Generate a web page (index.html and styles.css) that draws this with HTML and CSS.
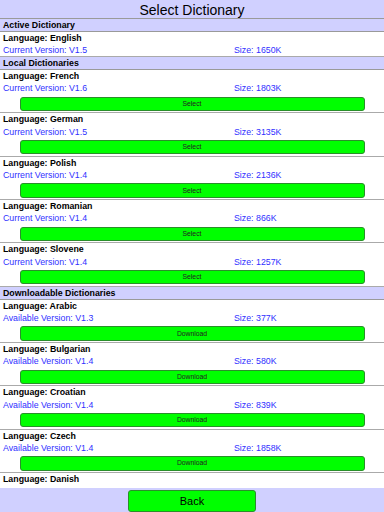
FILE: index.html
```html
<!DOCTYPE html>
<html lang="en">
<head>
  <meta charset="UTF-8" /><meta name="viewport" content="width=device-width, initial-scale=1.0"/>
  <title>Select Dictionary</title>
  <link rel="stylesheet" href="styles.css">
</head>
<body>
<header class="titlebar">Select Dictionary</header>

<div class="list">
  <div class="section">Active Dictionary</div>
  <div class="row short">
    <div class="lang">Language: English</div>
    <div class="info"><span>Current Version: V1.5</span><span>Size: 1650K</span></div>
  </div>

  <div class="section">Local Dictionaries</div>
  <div class="row">
    <div class="lang">Language: French</div>
    <div class="info"><span>Current Version: V1.6</span><span>Size: 1803K</span></div>
    <button class="btn">Select</button>
  </div>
  <div class="row">
    <div class="lang">Language: German</div>
    <div class="info"><span>Current Version: V1.5</span><span>Size: 3135K</span></div>
    <button class="btn">Select</button>
  </div>
  <div class="row">
    <div class="lang">Language: Polish</div>
    <div class="info"><span>Current Version: V1.4</span><span>Size: 2136K</span></div>
    <button class="btn">Select</button>
  </div>
  <div class="row">
    <div class="lang">Language: Romanian</div>
    <div class="info"><span>Current Version: V1.4</span><span>Size: 866K</span></div>
    <button class="btn">Select</button>
  </div>
  <div class="row">
    <div class="lang">Language: Slovene</div>
    <div class="info"><span>Current Version: V1.4</span><span>Size: 1257K</span></div>
    <button class="btn">Select</button>
  </div>

  <div class="section">Downloadable Dictionaries</div>
  <div class="row">
    <div class="lang">Language: Arabic</div>
    <div class="info"><span>Available Version: V1.3</span><span>Size: 377K</span></div>
    <button class="btn">Download</button>
  </div>
  <div class="row">
    <div class="lang">Language: Bulgarian</div>
    <div class="info"><span>Available Version: V1.4</span><span>Size: 580K</span></div>
    <button class="btn">Download</button>
  </div>
  <div class="row">
    <div class="lang">Language: Croatian</div>
    <div class="info"><span>Available Version: V1.4</span><span>Size: 839K</span></div>
    <button class="btn">Download</button>
  </div>
  <div class="row">
    <div class="lang">Language: Czech</div>
    <div class="info"><span>Available Version: V1.4</span><span>Size: 1858K</span></div>
    <button class="btn">Download</button>
  </div>
  <div class="row last">
    <div class="lang">Language: Danish</div>
  </div>
</div>

<div class="bottombar"><button class="back">Back</button></div>
</body>
</html>
```

FILE: styles.css
```css
html, body { margin: 0; height: 100%; overflow: hidden; }
body { font-family: "Liberation Sans", Arial, sans-serif; background: #fff; color: #000; display: flex; flex-direction: column; }
.titlebar { flex: none; height: 16px; padding-top: 2px; line-height: 16px; font-size: 14px; text-align: center; background: #d0d0ff; border-bottom: 1px solid #9a9a9a; }
.list { flex: 1; overflow: hidden; }
.section { height: 12px; line-height: 12px; padding-left: 3px; font-size: 8.8px; font-weight: bold; background: #d0d0ff; border-bottom: 1px solid #9a9a9a; }
.row { height: 42.33px; border-bottom: 1px solid #aaa; font-size: 8.8px; line-height: 12.4px; }
.row.short { height: 24px; }
.row.last { height: 14px; border-bottom: none; }
.lang { padding-left: 3px; font-weight: bold; }
.info { display: grid; grid-template-columns: 231px 1fr; padding-left: 3px; color: #3030ff; }
.btn { display: block; width: 345px; height: 14.5px; margin: 1.8px auto 0; padding: 0; background: #00ff00; border: 1px solid #2a8f2a; border-radius: 3px; font-family: inherit; font-size: 6.8px; color: #222; line-height: 12px; }
.bottombar { flex: none; height: 24px; background: #d0d0ff; display: flex; justify-content: center; align-items: center; }
.back { width: 128px; height: 22px; margin-top: 1px; padding: 0; background: #00ff00; border: 1px solid #2a8f2a; border-radius: 3px; font-family: inherit; font-size: 11px; line-height: 20px; color: #000; }
```
